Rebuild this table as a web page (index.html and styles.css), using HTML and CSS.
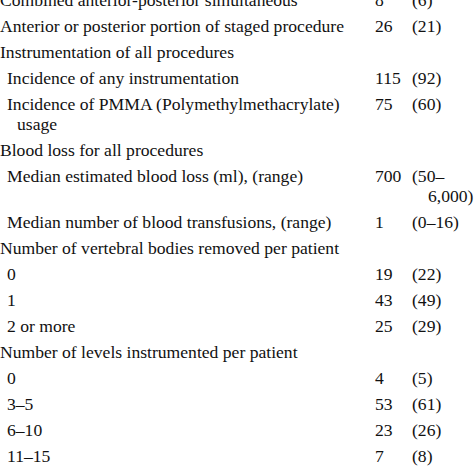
FILE: index.html
```html
<!DOCTYPE html>
<html lang="en">
<head>
<meta charset="utf-8">
<title>Table</title>
<link rel="stylesheet" href="styles.css">
</head>
<body>
<table class="data">
  <colgroup>
    <col class="c-label">
    <col class="c-num">
    <col class="c-pct">
  </colgroup>
  <tbody>
    <tr><td class="lab">Combined anterior-posterior simultaneous</td><td class="num">8</td><td class="pct">(6)</td></tr>
    <tr><td class="lab">Anterior or posterior portion of staged procedure</td><td class="num">26</td><td class="pct">(21)</td></tr>
    <tr><td class="lab">Instrumentation of all procedures</td><td class="num"></td><td class="pct"></td></tr>
    <tr><td class="lab sub">Incidence of any instrumentation</td><td class="num">115</td><td class="pct">(92)</td></tr>
    <tr><td class="lab sub">Incidence of PMMA (Polymethylmethacrylate) usage</td><td class="num">75</td><td class="pct">(60)</td></tr>
    <tr><td class="lab">Blood loss for all procedures</td><td class="num"></td><td class="pct"></td></tr>
    <tr><td class="lab sub">Median estimated blood loss (ml), (range)</td><td class="num">700</td><td class="pct">(50–6,000)</td></tr>
    <tr><td class="lab sub">Median number of blood transfusions, (range)</td><td class="num">1</td><td class="pct">(0–16)</td></tr>
    <tr><td class="lab">Number of vertebral bodies removed per patient</td><td class="num"></td><td class="pct"></td></tr>
    <tr><td class="lab sub">0</td><td class="num">19</td><td class="pct">(22)</td></tr>
    <tr><td class="lab sub">1</td><td class="num">43</td><td class="pct">(49)</td></tr>
    <tr><td class="lab sub">2 or more</td><td class="num">25</td><td class="pct">(29)</td></tr>
    <tr><td class="lab">Number of levels instrumented per patient</td><td class="num"></td><td class="pct"></td></tr>
    <tr><td class="lab sub">0</td><td class="num">4</td><td class="pct">(5)</td></tr>
    <tr><td class="lab sub">3–5</td><td class="num">53</td><td class="pct">(61)</td></tr>
    <tr><td class="lab sub">6–10</td><td class="num">23</td><td class="pct">(26)</td></tr>
    <tr><td class="lab sub">11–15</td><td class="num">7</td><td class="pct">(8)</td></tr>
  </tbody>
</table>
</body>
</html>
```
FILE: styles.css
```css
html, body {
  margin: 0;
  padding: 0;
  background: #ffffff;
  overflow: hidden;
}

body {
  width: 474px;
  height: 474px;
  font-family: "Liberation Serif", "Times New Roman", serif;
  font-size: 17.6px;
  line-height: 20px;
  color: #111111;
}

.data {
  margin-top: -13px;
  width: 476px;
  border-collapse: collapse;
  table-layout: fixed;
}

.c-label { width: 375px; }
.c-num { width: 37px; }
.c-pct { width: 64px; }

.data td {
  padding: 3px 0;
  vertical-align: top;
}

.lab {
  padding-left: 1px;
  padding-right: 8px;
}

.data td.lab.sub {
  padding-left: 17px;
  text-indent: -10px;
}

.data td.pct {
  padding-left: 16px;
  text-indent: -16px;
}
```
